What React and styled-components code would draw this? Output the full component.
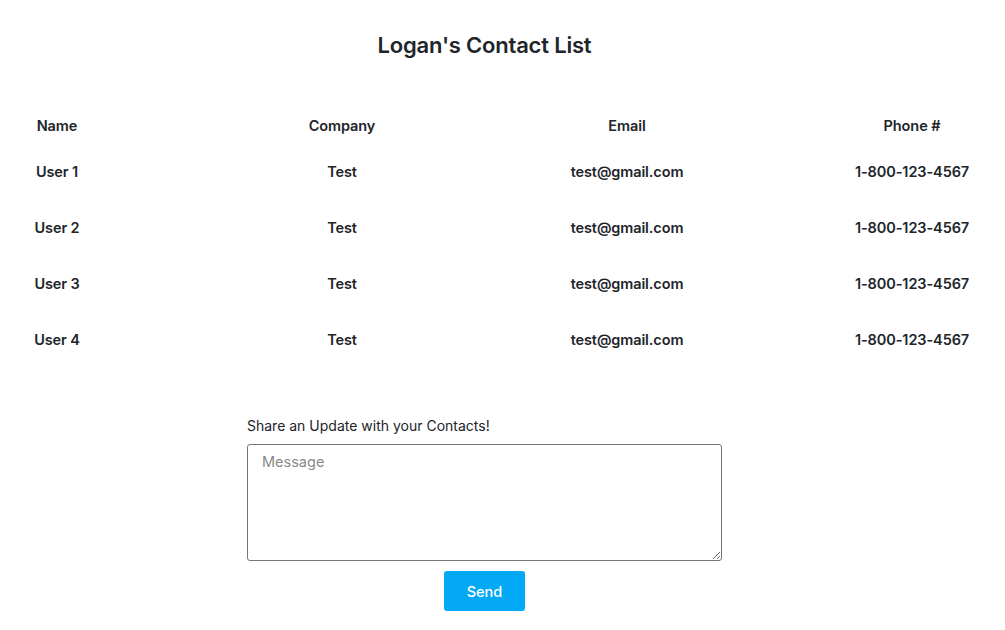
import React from "react";
import styled, { createGlobalStyle } from "styled-components";

const GlobalStyle = createGlobalStyle`
  body {
    margin: 0;
    padding: 0;
    background: #ffffff;
    color: #212529;
    font-family: Inter, "Noto Sans", "Liberation Sans", sans-serif;
  }
`;

const Page = styled.main`
  width: 969px;
  display: flex;
  flex-direction: column;
  align-items: center;
`;

const Title = styled.h1`
  margin: 31px 0 0 0;
  font-size: 22px;
  line-height: 28px;
  font-weight: 600;
  letter-spacing: -0.2px;
`;

const Table = styled.div`
  align-self: stretch;
  margin-top: 49px;
  display: grid;
  grid-template-columns: repeat(4, 114px);
  justify-content: space-between;
`;

const Cell = styled.div`
  justify-self: center;
  white-space: nowrap;
  font-size: 14.5px;
  font-weight: 600;
  line-height: ${({ $head }) => ($head ? "36px" : "56px")};
  letter-spacing: -0.1px;
`;

const Form = styled.form`
  margin-top: 49px;
  width: 475px;
  display: flex;
  flex-direction: column;
  align-items: center;
`;

const Label = styled.label`
  align-self: flex-start;
  font-size: 14px;
  line-height: 18px;
  margin-bottom: 9px;
`;

const Message = styled.textarea`
  box-sizing: border-box;
  width: 475px;
  height: 117px;
  border: 1px solid #767676;
  border-radius: 3px;
  padding: 8px 14px;
  font-family: inherit;
  font-size: 14.5px;
  color: #212529;
  &::placeholder {
    color: #8a8a8a;
  }
`;

const SendButton = styled.button`
  margin-top: 10px;
  width: 81px;
  height: 40px;
  border: none;
  border-radius: 3px;
  background: #03a9f4;
  color: #ffffff;
  font-family: inherit;
  font-size: 14.5px;
  font-weight: 500;
  cursor: pointer;
`;

const headers = ["Name", "Company", "Email", "Phone #"];
const contacts = [1, 2, 3, 4].map((n) => ({
  name: `User ${n}`,
  company: "Test",
  email: "test@gmail.com",
  phone: "1-800-123-4567",
}));

export default function App() {
  return (
    <>
      <GlobalStyle />
      <Page>
        <Title>Logan's Contact List</Title>
        <Table>
          {headers.map((h) => (
            <Cell key={h} $head>
              {h}
            </Cell>
          ))}
          {contacts.map((c) => (
            <React.Fragment key={c.name}>
              <Cell>{c.name}</Cell>
              <Cell>{c.company}</Cell>
              <Cell>{c.email}</Cell>
              <Cell>{c.phone}</Cell>
            </React.Fragment>
          ))}
        </Table>
        <Form onSubmit={(e) => e.preventDefault()}>
          <Label htmlFor="msg">Share an Update with your Contacts!</Label>
          <Message id="msg" placeholder="Message" />
          <SendButton type="submit">Send</SendButton>
        </Form>
      </Page>
    </>
  );
}
